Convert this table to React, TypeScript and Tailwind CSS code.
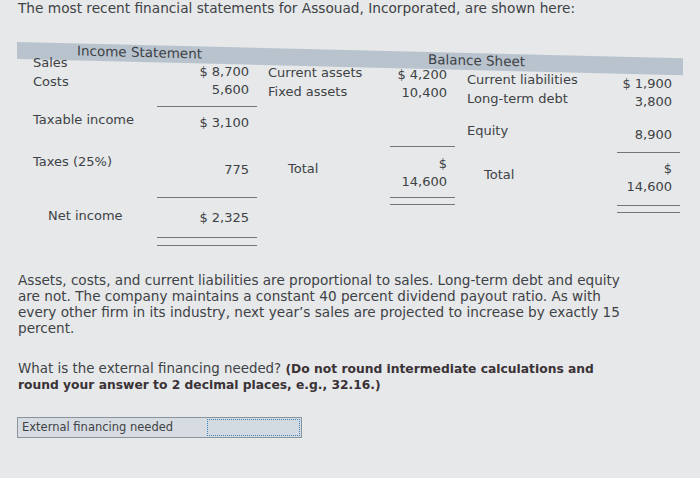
import React from "react";

const Line = ({ mt, w, ml }: { mt: string; w: string; ml: string }) => (
  <div className={`h-px bg-[#6f777d] ${mt} ${w} ${ml}`} />
);

export default function App() {
  return (
    <div
      className="w-[700px] h-[478px] bg-[#e6e8e9] text-[#3e4246] overflow-hidden"
      style={{ fontFamily: "'DejaVu Sans', Arial, sans-serif" }}
    >
      <div className="pl-[18px] text-[13.7px] leading-[17px] whitespace-nowrap">
        The most recent financial statements for Assouad, Incorporated, are shown here:
      </div>

      <div className="ml-[17px] mt-[25px] w-[666px] text-[13px] leading-[16px]">
        {/* header band */}
        <div className="h-[17px] flex bg-[#b8c3ce] origin-left skew-y-[1.4deg] text-[13.5px]">
          <div className="w-[245px] text-center -mt-[1px]">Income Statement</div>
          <div className="flex-1 text-center pl-[8px] -mt-[1px]">Balance Sheet</div>
        </div>

        {/* columns */}
        <div className="relative flex whitespace-nowrap">
          <div className="w-[133px] pl-[16px] flex flex-col">
            <div className="-mt-[4px]">Sales</div>
            <div className="mt-[3px]">Costs</div>
            <div className="mt-[22px]">Taxable income</div>
            <div className="mt-[26px]">Taxes (25%)</div>
            <div className="mt-[38px] pl-[15px]">Net income</div>
          </div>

          <div className="w-[112px] flex flex-col text-right pr-[13px]">
            <div className="mt-[5px]">$ 8,700</div>
            <div className="mt-[2px]">5,600</div>
            <Line mt="mt-[8px]" w="w-[100px]" ml="ml-[7px]" />
            <div className="mt-[8px]">$ 3,100</div>
            <div className="mt-[31px]">775</div>
            <Line mt="mt-[19px]" w="w-[100px]" ml="ml-[7px]" />
            <div className="mt-[12px]">$ 2,325</div>
            <Line mt="mt-[11px]" w="w-[100px]" ml="ml-[7px]" />
            <Line mt="mt-[7px]" w="w-[100px]" ml="ml-[7px]" />
          </div>

          <div className="w-[123px] pl-[6px] flex flex-col">
            <div className="mt-[6px]">Current assets</div>
            <div className="mt-[3px]">Fixed assets</div>
            <div className="mt-[61px] pl-[20px]">Total</div>
          </div>

          <div className="w-[73px] flex flex-col text-right pr-[11px]">
            <div className="mt-[8px]">$ 4,200</div>
            <div className="mt-[2px]">10,400</div>
            <Line mt="mt-[45px]" w="w-[65px]" ml="ml-[5px]" />
            <div className="mt-[9px]">$</div>
            <div className="mt-[2px]">14,600</div>
            <Line mt="mt-[7px]" w="w-[65px]" ml="ml-[5px]" />
            <Line mt="mt-[6px]" w="w-[65px]" ml="ml-[5px]" />
          </div>

          <div className="w-[154px] pl-[9px] flex flex-col">
            <div className="mt-[13px]">Current liabilities</div>
            <div className="mt-[3px]">Long-term debt</div>
            <div className="mt-[16px]">Equity</div>
            <div className="mt-[28px] pl-[17px]">Total</div>
          </div>

          <div className="w-[71px] flex flex-col text-right pr-[11px]">
            <div className="mt-[17px]">$ 1,900</div>
            <div className="mt-[2px]">3,800</div>
            <div className="mt-[17px]">8,900</div>
            <Line mt="mt-[9px]" w="w-[63px]" ml="ml-[5px]" />
            <div className="mt-[8px]">$</div>
            <div className="mt-[2px]">14,600</div>
            <Line mt="mt-[10px]" w="w-[63px]" ml="ml-[5px]" />
            <Line mt="mt-[6px]" w="w-[63px]" ml="ml-[5px]" />
          </div>
        </div>
      </div>

      <div className="pl-[18px] mt-[26px] text-[13.6px] leading-[16px] whitespace-nowrap">
        Assets, costs, and current liabilities are proportional to sales. Long-term debt and equity
        <br />
        are not. The company maintains a constant 40 percent dividend payout ratio. As with
        <br />
        every other firm in its industry, next year’s sales are projected to increase by exactly 15
        <br />
        percent.
      </div>

      <div className="pl-[18px] mt-[25px] text-[13.4px] leading-[16px] whitespace-nowrap">
        What is the external financing needed?{" "}
        <span className="font-bold text-[#3a3236] text-[12.3px]">
          (Do not round intermediate calculations and
          <br />
          round your answer to 2 decimal places, e.g., 32.16.)
        </span>
      </div>

      <div className="ml-[17px] mt-[24px] w-[285px] h-[21px] flex border border-[#8a949b] bg-[#d6dce1]">
        <div className="w-[188px] pl-[4px] text-[11.5px] leading-[19px] whitespace-nowrap">
          External financing needed
        </div>
        <div className="flex-1 m-px border border-dotted border-[#3d82c0] bg-[#d3dbe2]" />
      </div>
    </div>
  );
}
